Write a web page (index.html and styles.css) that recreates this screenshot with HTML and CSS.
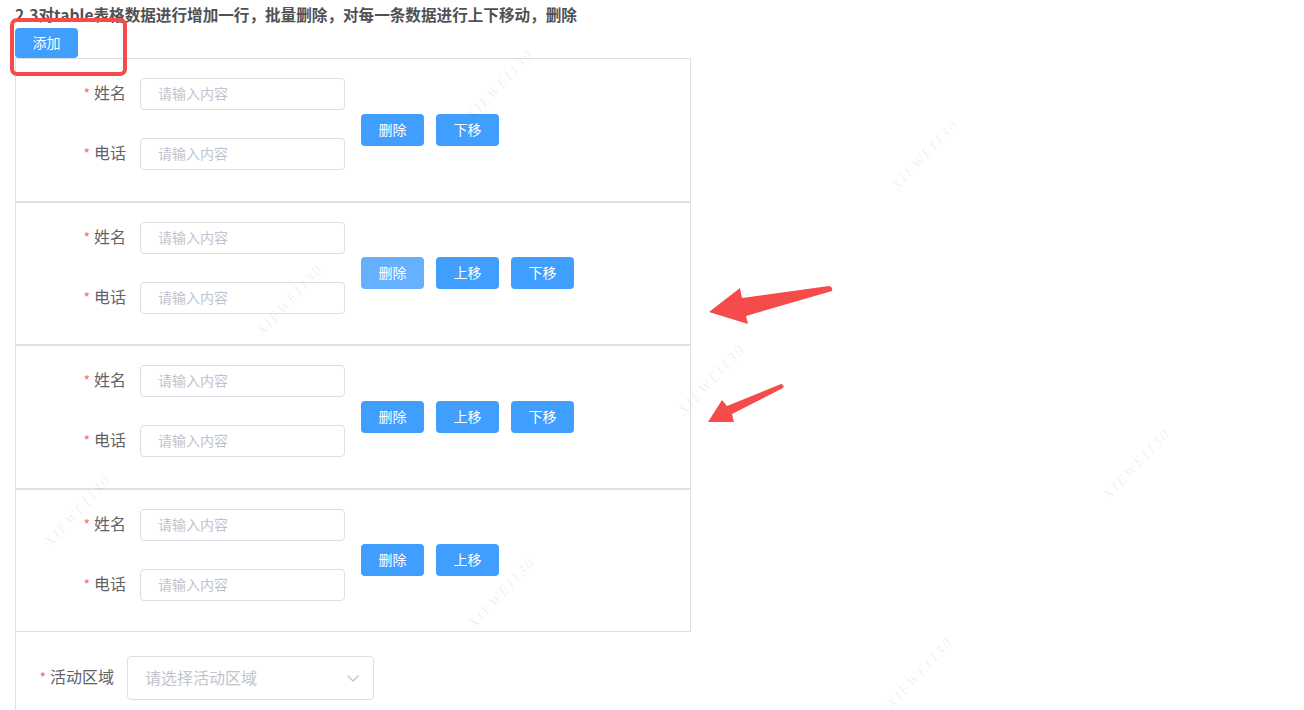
FILE: index.html
```html
<!DOCTYPE html>
<html lang="zh-CN">
<head>
<meta charset="utf-8">
<title>table</title>
<link rel="stylesheet" href="styles.css">
</head>
<body>
<div class="page">
  <h3 class="title">2.3对table表格数据进行增加一行，批量删除，对每一条数据进行上下移动，删除</h3>
  <button class="btn add">添加</button>
  <div class="panel">
    <div class="card">
      <div class="fields">
        <div class="row"><label class="label"><span class="req">*</span>姓名</label><input class="input" placeholder="请输入内容"></div>
        <div class="row"><label class="label"><span class="req">*</span>电话</label><input class="input" placeholder="请输入内容"></div>
      </div>
      <div class="actions"><button class="btn">删除</button><button class="btn">下移</button></div>
    </div>
    <div class="card">
      <div class="fields">
        <div class="row"><label class="label"><span class="req">*</span>姓名</label><input class="input" placeholder="请输入内容"></div>
        <div class="row"><label class="label"><span class="req">*</span>电话</label><input class="input" placeholder="请输入内容"></div>
      </div>
      <div class="actions"><button class="btn light">删除</button><button class="btn">上移</button><button class="btn">下移</button></div>
    </div>
    <div class="card">
      <div class="fields">
        <div class="row"><label class="label"><span class="req">*</span>姓名</label><input class="input" placeholder="请输入内容"></div>
        <div class="row"><label class="label"><span class="req">*</span>电话</label><input class="input" placeholder="请输入内容"></div>
      </div>
      <div class="actions"><button class="btn">删除</button><button class="btn">上移</button><button class="btn">下移</button></div>
    </div>
    <div class="card">
      <div class="fields">
        <div class="row"><label class="label"><span class="req">*</span>姓名</label><input class="input" placeholder="请输入内容"></div>
        <div class="row"><label class="label"><span class="req">*</span>电话</label><input class="input" placeholder="请输入内容"></div>
      </div>
      <div class="actions"><button class="btn">删除</button><button class="btn">上移</button></div>
    </div>
    <div class="region-row">
      <label class="label region-label"><span class="req">*</span>活动区域</label>
      <div class="select"><span class="select-text">请选择活动区域</span>
        <svg class="chevron" width="14" height="14" viewBox="0 0 14 14"><path d="M1.5 4.5 L7 10 L12.5 4.5" fill="none" stroke="#c0c4cc" stroke-width="1.3"/></svg>
      </div>
    </div>
  </div>
</div>

<div class="annot-box"></div>
<svg class="arrows" width="1304" height="710" viewBox="0 0 1304 710">
  <path d="M709 312 L740 288 L742 298 L829 286 Q833 287 832 291 L746 316 L748 324 Z" fill="#f54b4a"/>
  <path d="M708 422 L722 400 L727 406 L781 384 Q785 385 783 388 L732 414 L734 422 Z" fill="#f54b4a"/>
</svg>

<span class="wm wm1">XIEWEI130</span>
<span class="wm wm2">XIEWEI130</span>
<span class="wm wm3">XIEWEI130</span>
<span class="wm wm4">XIEWEI130</span>
<span class="wm wm5">XIEWEI130</span>
<span class="wm wm6">XIEWEI130</span>
<span class="wm wm7">XIEWEI130</span>
<span class="wm wm8">XIEWEI130</span>
</body>
</html>
```
FILE: styles.css
```css
html, body {
  margin: 0;
  padding: 0;
  background: #fff;
  overflow: hidden;
}
body {
  position: relative;
  height: 710px;
  font-family: "Noto Sans CJK SC", "Microsoft YaHei", sans-serif;
  color: #606266;
}
.page {
  padding-left: 15px;
}
.title {
  margin: 3px 0 0;
  font-size: 15.6px;
  line-height: 22px;
  font-weight: bold;
  color: #4f5155;
}
.btn {
  width: 63px;
  height: 32px;
  padding: 0 0 2px;
  border: 0;
  border-radius: 4px;
  background: #409eff;
  color: #fff;
  font-family: inherit;
  font-size: 14px;
  line-height: 30px;
}
.btn.light {
  background: #66b1ff;
}
.btn.add {
  display: block;
  height: 30px;
  line-height: 28px;
  margin-top: 3px;
}
.panel {
  width: 675px;
  border-left: 1px solid #dcdfe6;
  height: 652px;
}
.card {
  display: flex;
  align-items: center;
  border: 1px solid #dcdfe6;
  border-left: 0;
}
.fields {
  padding: 19px 0 30.5px;
}
.row {
  display: flex;
  align-items: center;
  height: 32px;
}
.row + .row {
  margin-top: 28px;
}
.label {
  width: 110px;
  margin-right: 14px;
  padding-bottom: 3px;
  text-align: right;
  font-size: 16px;
  line-height: 22px;
  color: #606266;
}
.req {
  color: #f56c6c;
  font-size: 14px;
  margin-right: 4px;
}
.input {
  width: 205px;
  height: 32px;
  box-sizing: border-box;
  border: 1px solid #dcdfe6;
  border-radius: 4px;
  padding: 0 15px 2px 17px;
  font-family: inherit;
  font-size: 14px;
  color: #606266;
  outline: none;
}
.input::placeholder {
  color: #c0c4cc;
}
.actions {
  display: flex;
  gap: 12px;
  margin-left: 16px;
}
.region-row {
  display: flex;
  align-items: center;
  margin-top: 24px;
}
.region-label {
  width: 98px;
  margin-right: 13px;
}
.select {
  width: 247px;
  height: 44px;
  box-sizing: border-box;
  border: 1px solid #dcdfe6;
  border-radius: 4px;
  padding: 0 13px 2px 17px;
  display: flex;
  align-items: center;
  justify-content: space-between;
  font-size: 16px;
  color: #c0c4cc;
}
.chevron {
  display: block;
  margin-top: 2px;
}
.annot-box {
  position: absolute;
  left: 10px;
  top: 18px;
  width: 117px;
  height: 58px;
  box-sizing: border-box;
  border: 4px solid #f54b4a;
  border-radius: 7px;
}
.arrows {
  position: absolute;
  left: 0;
  top: 0;
  pointer-events: none;
}
.wm {
  position: absolute;
  transform: translate(-50%, -50%) rotate(-47deg);
  font-family: "Liberation Serif", serif;
  font-style: italic;
  font-size: 15px;
  letter-spacing: 2px;
  color: rgba(0, 0, 0, 0.07);
  white-space: nowrap;
  pointer-events: none;
}
.wm1 { left: 500px; top: 85px; }
.wm2 { left: 925px; top: 155px; }
.wm3 { left: 290px; top: 300px; }
.wm4 { left: 712px; top: 380px; }
.wm5 { left: 1137px; top: 464px; }
.wm6 { left: 78px; top: 511px; }
.wm7 { left: 502px; top: 593px; }
.wm8 { left: 920px; top: 673px; }
```
